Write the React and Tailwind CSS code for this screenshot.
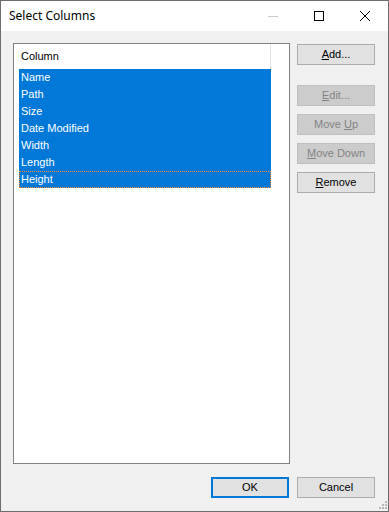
import React from 'react';

const rows = ['Name', 'Path', 'Size', 'Date Modified', 'Width', 'Length', 'Height'];

function Btn({ children, disabled, primary, className = '' }) {
  const base = 'h-[21px] w-[78px] flex items-center justify-center text-[11px] leading-none';
  const look = disabled
    ? 'bg-[#cccccc] border border-[#bfbfbf] text-[#838383]'
    : primary
    ? 'bg-[#e1e1e1] border-2 border-[#0078d7] text-black'
    : 'bg-[#e1e1e1] border border-[#adadad] text-black';
  return <div className={`${base} ${look} ${className}`}>{children}</div>;
}

export default function App() {
  return (
    <div
      className="w-[389px] h-[512px] flex flex-col border border-[#6d6d6d] bg-[#f0f0f0] relative"
      style={{ fontFamily: '"Liberation Sans", Arial, sans-serif' }}
    >
      {/* Title bar */}
      <div className="h-[30px] bg-white flex items-center shrink-0">
        <span className="pl-[8px] text-[12px] text-black" style={{ fontFamily: '"Noto Sans", "Liberation Sans", sans-serif' }}>
          Select Columns
        </span>
        <div className="ml-auto flex h-full">
          <div className="w-[46px] h-full flex items-center justify-center">
            <svg width="10" height="10" viewBox="0 0 10 10">
              <line x1="0" y1="5.5" x2="10" y2="5.5" stroke="#cccccc" strokeWidth="1" />
            </svg>
          </div>
          <div className="w-[46px] h-full flex items-center justify-center">
            <svg width="10" height="10" viewBox="0 0 10 10">
              <rect x="0.5" y="0.5" width="9" height="9" fill="none" stroke="#000" strokeWidth="1" />
            </svg>
          </div>
          <div className="w-[46px] h-full flex items-center justify-center">
            <svg width="10" height="10" viewBox="0 0 10 10">
              <path d="M0 0 L10 10 M10 0 L0 10" stroke="#000" strokeWidth="1" />
            </svg>
          </div>
        </div>
      </div>

      {/* Body */}
      <div className="flex flex-col pl-[12px] pt-[12px]">
        <div className="flex">
          {/* List box */}
          <div className="w-[277px] h-[421px] border border-[#828282] bg-white pl-[5px]">
            <div className="w-[252px] h-[25px] flex items-center border-r border-[#e5e5e5] text-[11px] text-black pl-[2px]">
              Column
            </div>
            {rows.map((r, i) => (
              <div
                key={r}
                className={`w-[252px] h-[17px] flex items-center bg-[#0078d7] text-white text-[11px] ${
                  i === rows.length - 1 ? 'border border-dotted border-[#ff8728] pl-[1px]' : 'pl-[2px]'
                }`}
              >
                {r}
              </div>
            ))}
          </div>

          {/* Side buttons */}
          <div className="ml-[7px] pt-[1px] flex flex-col">
            <Btn><span><span className="underline">A</span>dd...</span></Btn>
            <Btn disabled className="mt-[20px]"><span><span className="underline">E</span>dit...</span></Btn>
            <Btn disabled className="mt-[8px]"><span>Move <span className="underline">U</span>p</span></Btn>
            <Btn disabled className="mt-[8px]"><span><span className="underline">M</span>ove Down</span></Btn>
            <Btn className="mt-[8px]"><span><span className="underline">R</span>emove</span></Btn>
          </div>
        </div>

        {/* Bottom buttons */}
        <div className="flex mt-[13px] pl-[198px]">
          <Btn primary className="w-[77px]">OK</Btn>
          <Btn className="ml-[8px]">Cancel</Btn>
        </div>
      </div>

      {/* Resize grip */}
      <svg className="absolute right-[1px] bottom-[1px]" width="10" height="10" viewBox="0 0 10 10">
        {[[8, 0], [8, 3], [5, 3], [8, 6], [5, 6], [2, 6]].map(([x, y], i) => (
          <rect key={i} x={x} y={y + 1} width="2" height="2" fill="#b8b8b8" />
        ))}
      </svg>
    </div>
  );
}
